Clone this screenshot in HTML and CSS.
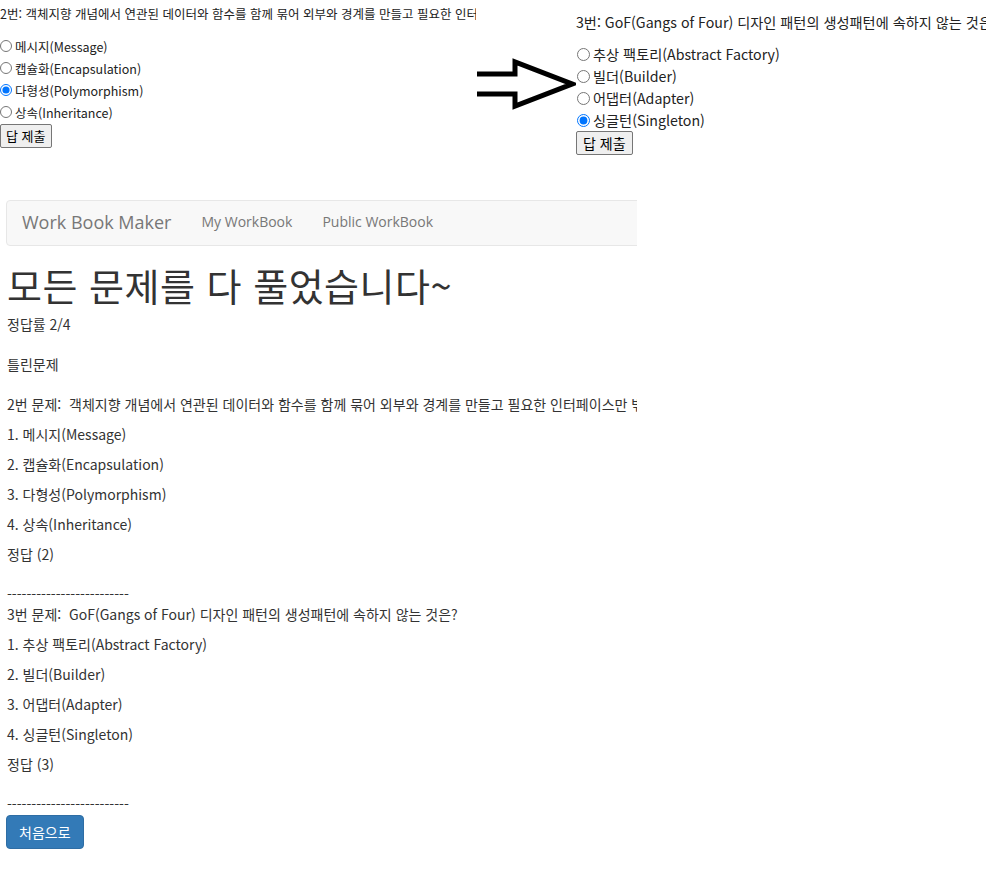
FILE: index.html
```html
<!DOCTYPE html>
<html lang="ko">
<head>
    <meta charset="UTF-8">
    <meta name="viewport" content="width=device-width, initial-scale=1.0">
    <link rel="stylesheet" href="styles.css">
    <title>Work Book Maker</title>
</head>
<body>
    <div class="shots">
        <form class="quiz quiz-small">
            <div class="question">2번: 객체지향 개념에서 연관된 데이터와 함수를 함께 묶어 외부와 경계를 만들고 필요한 인터페이스만 밖으로 드러내는 과정은?</div>
            <label class="option"><input type="radio" name="q2"> 메시지(Message)</label>
            <label class="option"><input type="radio" name="q2"> 캡슐화(Encapsulation)</label>
            <label class="option"><input type="radio" name="q2" checked> 다형성(Polymorphism)</label>
            <label class="option"><input type="radio" name="q2"> 상속(Inheritance)</label>
            <button type="button" class="submit">답 제출</button>
        </form>

        <svg class="arrow" width="100" height="120" viewBox="0 0 100 120">
            <path d="M1 74 H39 V62 L96 84 L39 106 V94 H1" fill="none" stroke="#000" stroke-width="5"/>
        </svg>

        <form class="quiz quiz-large">
            <div class="question">3번: GoF(Gangs of Four) 디자인 패턴의 생성패턴에 속하지 않는 것은?</div>
            <label class="option"><input type="radio" name="q3"> 추상 팩토리(Abstract Factory)</label>
            <label class="option"><input type="radio" name="q3"> 빌더(Builder)</label>
            <label class="option"><input type="radio" name="q3"> 어댑터(Adapter)</label>
            <label class="option"><input type="radio" name="q3" checked> 싱글턴(Singleton)</label>
            <button type="button" class="submit">답 제출</button>
        </form>
    </div>

    <div class="result-page">
        <nav class="navbar">
            <a class="brand" href="#">Work Book Maker</a>
            <a class="nav-link" href="#">My WorkBook</a>
            <a class="nav-link" href="#">Public WorkBook</a>
        </nav>

        <h1>모든 문제를 다 풀었습니다~</h1>
        <p class="gap">정답률 2/4</p>
        <p class="gap">틀린문제</p>

        <p>2번 문제:&nbsp; 객체지향 개념에서 연관된 데이터와 함수를 함께 묶어 외부와 경계를 만들고 필요한 인터페이스만 밖으로 드러내는 과정은?</p>
        <p>1. 메시지(Message)</p>
        <p>2. 캡슐화(Encapsulation)</p>
        <p>3. 다형성(Polymorphism)</p>
        <p>4. 상속(Inheritance)</p>
        <p class="gap">정답 (2)</p>

        <p>-------------------------<br>3번 문제:&nbsp; GoF(Gangs of Four) 디자인 패턴의 생성패턴에 속하지 않는 것은?</p>
        <p>1. 추상 팩토리(Abstract Factory)</p>
        <p>2. 빌더(Builder)</p>
        <p>3. 어댑터(Adapter)</p>
        <p>4. 싱글턴(Singleton)</p>
        <p class="gap">정답 (3)</p>

        <div>-------------------------</div>
        <button type="button" class="btn-primary">처음으로</button>
    </div>
</body>
</html>
```

FILE: styles.css
```css
body {
    margin: 0;
    font-family: "Noto Sans CJK KR", sans-serif;
    color: #333;
    background: #fff;
    overflow: hidden;
}

/* two cropped screenshots of the quiz form */
.shots {
    display: flex;
    align-items: flex-start;
    height: 200px;
    white-space: nowrap;
}

.quiz {
    display: flex;
    flex-direction: column;
    align-items: flex-start;
    overflow: hidden;
    color: #222;
}

.quiz-small {
    width: 476px;
    flex-shrink: 0;
    font-size: 12.5px;
    padding-top: 4px;
}

.quiz-large {
    flex: 1;
    font-size: 14.2px;
    padding-top: 12px;
}

.question {
    line-height: 20px;
    margin-bottom: 11px;
}

.option {
    display: flex;
    align-items: center;
    height: 22px;
    gap: 3px;
}

.option input {
    margin: 0;
    width: 12px;
    height: 12px;
}

.quiz-large .option input {
    width: 13px;
    height: 13px;
    margin-left: 1px;
}

.submit {
    font-family: inherit;
    font-size: 13px;
    line-height: 18px;
    padding: 2px 5px;
    margin: 1px 0 0;
    background: #efefef;
    border: 1px solid #767676;
    border-radius: 2px;
    color: #000;
}

.quiz-large .submit {
    font-size: 14px;
    padding: 2px 6px;
    margin-top: 0;
}

.arrow {
    flex-shrink: 0;
}

/* result page (bootstrap look) */
.result-page {
    width: 631px;
    padding-left: 6px;
    overflow: hidden;
    white-space: nowrap;
    font-size: 14px;
    line-height: 20px;
}

.navbar {
    display: flex;
    align-items: center;
    width: 700px;
    height: 44px;
    padding-bottom: 3px;
    box-sizing: content-box;
    height: 41px;
    background: #f8f8f8;
    border: 1px solid #e7e7e7;
    border-radius: 4px;
    font-family: "Open Sans", sans-serif;
}

.navbar a {
    color: #777;
    text-decoration: none;
    padding: 0 15px;
}

.brand {
    font-size: 18px;
}

.nav-link {
    font-size: 14px;
}

h1 {
    font-size: 38px;
    font-weight: 400;
    letter-spacing: 0.5px;
    line-height: 40px;
    margin: 19px 0 9px 1px;
}

p {
    margin: 0 0 10px 1px;
}

p.gap {
    margin-bottom: 20px;
}

.result-page > div {
    margin-left: 1px;
}

.btn-primary {
    font-family: inherit;
    font-size: 14px;
    line-height: 20px;
    padding: 6px 12px;
    margin-top: 1px;
    color: #fff;
    background: #337ab7;
    border: 1px solid #2e6da4;
    border-radius: 4px;
}
```
